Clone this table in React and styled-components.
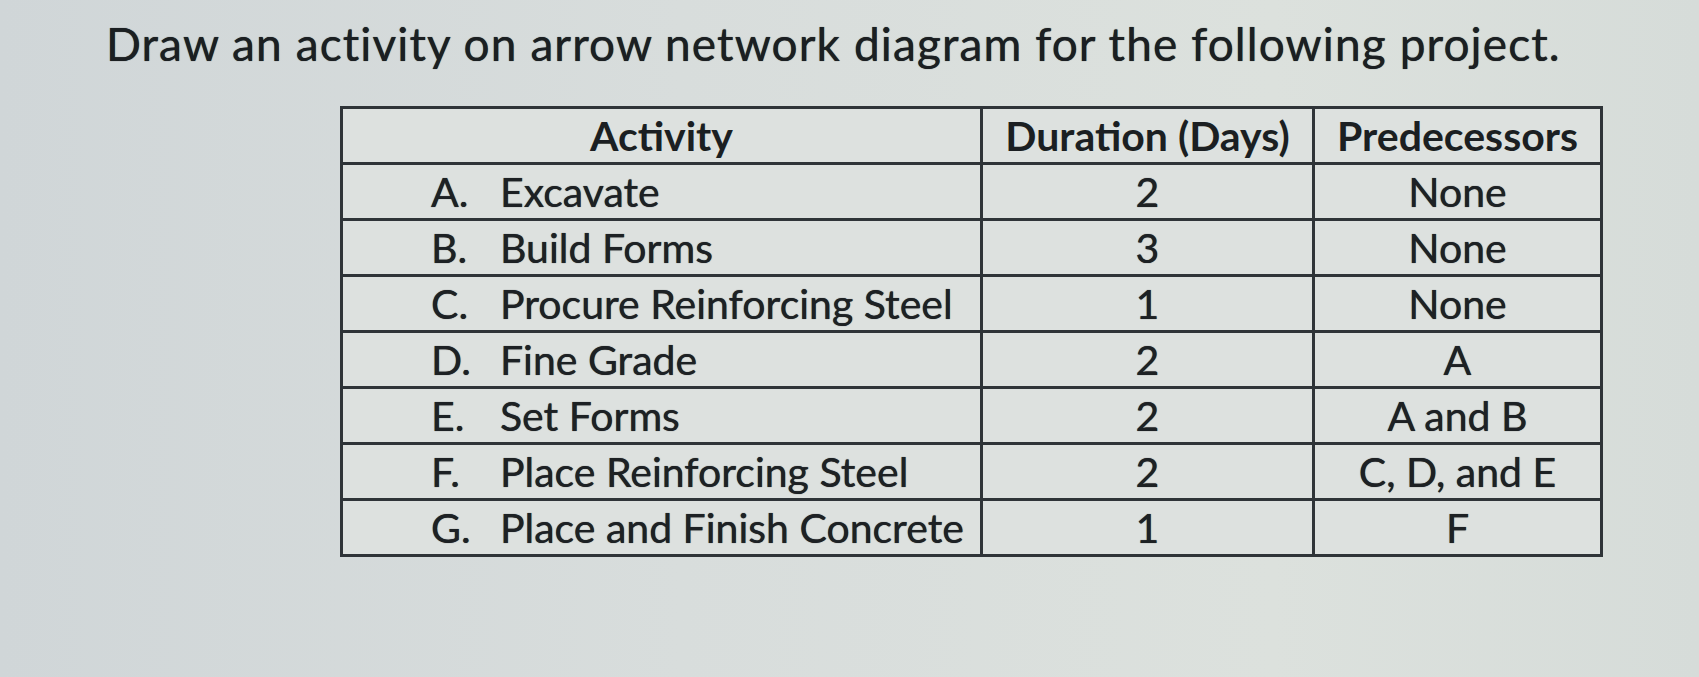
import React from 'react';
import styled, { createGlobalStyle } from 'styled-components';

const GlobalStyle = createGlobalStyle`
  html, body {
    margin: 0;
    padding: 0;
  }
  body {
    background: linear-gradient(90deg, #d0d6d8 0%, #d8dddc 40%, #dce1dd 75%, #d6dcd9 100%);
    font-family: Lato, 'Open Sans', sans-serif;
    color: #1d2124;
  }
`;

const Page = styled.div`
  width: 1699px;
  height: 677px;
  overflow: hidden;
  padding: 20px 0 0 106px;
  box-sizing: border-box;
`;

const Title = styled.h1`
  margin: 0;
  font-size: 46px;
  font-weight: 400;
  line-height: 48px;
  letter-spacing: 1.1px;
  white-space: nowrap;
  color: #1b1f22;
  text-shadow: 0 0 0.8px #1b1f22;
`;

const Table = styled.table`
  margin: 38px 0 0 234px;
  width: 1260px;
  border-collapse: collapse;
  border: 3px solid #2f3438;
  background: #dde1df;
  table-layout: fixed;
`;

const HeadCell = styled.th`
  height: 53px;
  padding: 0;
  font-size: 41px;
  font-weight: 700;
  text-align: center;
  border: 3px solid #2f3438;
  white-space: nowrap;
  color: #1b1f22;
`;

const Cell = styled.td`
  height: 53px;
  padding: 0 0 0 ${({ $indent }) => ($indent ? '88px' : '0')};
  font-size: 41px;
  font-weight: 400;
  text-align: ${({ $indent }) => ($indent ? 'left' : 'center')};
  border: 3px solid #2f3438;
  white-space: nowrap;
  color: #1d2124;
  text-shadow: 0 0 0.8px #1d2124;
`;

const Letter = styled.span`
  display: inline-block;
  width: 69px;
`;

const rows = [
  ['A.', 'Excavate', '2', 'None'],
  ['B.', 'Build Forms', '3', 'None'],
  ['C.', 'Procure Reinforcing Steel', '1', 'None'],
  ['D.', 'Fine Grade', '2', 'A'],
  ['E.', 'Set Forms', '2', 'A and B'],
  ['F.', 'Place Reinforcing Steel', '2', 'C, D, and E'],
  ['G.', 'Place and Finish Concrete', '1', 'F'],
];

const App = () => (
  <>
    <GlobalStyle />
    <Page>
      <Title>Draw an activity on arrow network diagram for the following project.</Title>
      <Table>
        <colgroup>
          <col style={{ width: 640 }} />
          <col style={{ width: 332 }} />
          <col style={{ width: 288 }} />
        </colgroup>
        <thead>
          <tr>
            <HeadCell>Activity</HeadCell>
            <HeadCell>Duration (Days)</HeadCell>
            <HeadCell>Predecessors</HeadCell>
          </tr>
        </thead>
        <tbody>
          {rows.map(([letter, name, days, pred]) => (
            <tr key={letter}>
              <Cell $indent>
                <Letter>{letter}</Letter>
                {name}
              </Cell>
              <Cell>{days}</Cell>
              <Cell>{pred}</Cell>
            </tr>
          ))}
        </tbody>
      </Table>
    </Page>
  </>
);

export default App;
